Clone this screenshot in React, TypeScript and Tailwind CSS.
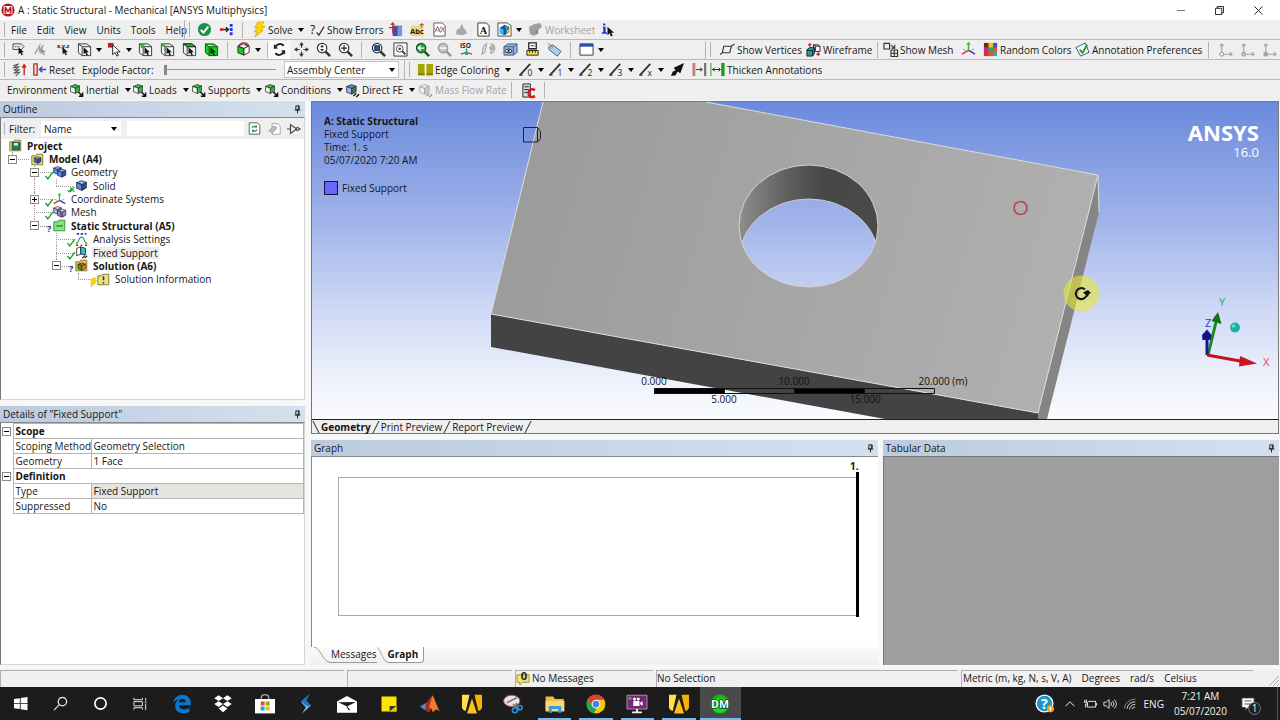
import type { ReactNode } from "react";
import { clsx } from "clsx";

const cube = (top: string, left: string, right: string) => (
  <g stroke="#222" strokeWidth="0.9" strokeLinejoin="round">
    <path d="M2 4.500 8 2l6 2-5.500 3z" fill={top} />
    <path d="M2 4.500 8.500 7v7L2 11.500z" fill={left} />
    <path d="M8.500 7 14 4v7l-5.500 3z" fill={right} />
  </g>
);

const wireBox = (
  <path d="M1.500 2h9l4 3v9.500h-9l-4-3zM1.500 2l4 3h9M5.500 5v9.500" fill="#f6f6f6" stroke="#333" />
);

const pointer = (
  <path d="M7 5.500v7.500l1.800-1.600 1.300 2.800 1.500-.7-1.300-2.700h2.400z" fill="#111" />
);

const magnifier = (fill: string, stroke = "#333") => (
  <g>
    <circle cx="6.500" cy="6.500" r="5" fill={fill} stroke={stroke} strokeWidth="1.300" />
    <path d="m10.200 10.200 4.800 4.800" stroke={stroke} strokeWidth="2.600" />
  </g>
);

const edgeLine = (label: string) => (
  <g>
    <path d="M1 14 12 2" stroke="#333" strokeWidth="2" />
    <path d="M0 14h4" stroke="#333" />
    <text x="9" y="15" fontSize="9" fill="#222">{label}</text>
  </g>
);

const loadCube = (face: string) => (
  <g>
    <g transform="scale(.8)">{cube(face, "#e9f7e9", "#3fae49")}</g>
    <path d="m10 9.500 4 4M14.500 10v4h-4" stroke="#111" strokeWidth="1.600" fill="none" />
  </g>
);

const axes = (
  <g strokeWidth="1.600" fill="none">
    <path d="M8 9V1" stroke="#35c435" />
    <path d="m8 9 7 4" stroke="#2437d6" />
    <path d="m8 9-7 4" stroke="#d33" />
    <path d="m6.500 3 1.500-2 1.500 2" stroke="#35c435" />
    <path d="M2 7.500 5 9M14 7.500 11 9" stroke="#6aa" strokeWidth="1" />
  </g>
);

const triadGray = (dot: string) => (
  <g stroke="#a2a2a2" fill="none" strokeWidth="1.200">
    <path d="M4 12V2M2 4.500 4 2l2 2.500M6 13h9M12.500 11l2.500 2-2.500 2" />
    <circle cx="4" cy="13" r="2" fill={dot} />
  </g>
);

const folder = (fill: string) => (
  <path d="M1 3.500h4.500L7 1.500h7.500v13H1z" fill={fill} stroke="#6b6424" />
);

const ansysMark = (
  <g>
    <path d="M0 .5h6L3 13.500A3.500 3.500 0 0 1 0 11z" fill="#ffe14a" />
    <path d="M10 .5h6V11a3.500 3.500 0 0 1-3 2.500z" fill="#f4b400" />
    <path d="M8 3.500 12 15.500H4z" fill="#ffbf1f" />
  </g>
);

const drawings: Record<string, ReactNode> = {
  mech: (
    <g>
      <circle cx="8" cy="8" r="7.500" fill="#b51a20" />
      <path d="M3 3.500h10v9H3z" fill="#fff" />
      <path d="M4 12V4.500h1.800L8 8l2.200-3.500H12V12h-2V8l-2 3-2-3v4z" fill="#c3151b" />
    </g>
  ),
  ok: (
    <g>
      <circle cx="8" cy="8" r="7" fill="#189146" />
      <path d="m4 8.500 3 2.800L12 5" stroke="#fff" strokeWidth="2.200" fill="none" />
    </g>
  ),
  dots: (
    <g>
      <path d="M3 8h6M7.500 5.500 10 8l-2.500 2.500" stroke="#222" fill="none" strokeWidth="1.500" />
      <path d="M1 6.500h3v3H1z" fill="#d02a2a" />
      <path d="M11.500 2h3v3h-3zM11.500 6.500h3v3h-3zM11.500 11h3v3h-3z" fill="#2438d8" />
    </g>
  ),
  bolt: <path d="M6 0h7L10 4.500h4L9 9h3L3 16l2.500-5.500H2L6 6H3z" fill="#ffd800" stroke="#b99a00" strokeWidth=".6" />,
  question: (
    <g>
      <text x="0" y="13" fontSize="13" fill="#222">?</text>
      <path d="m7 11 2.500 3L15 5" stroke="#333" strokeWidth="1.300" fill="none" />
    </g>
  ),
  chart: (
    <g>
      <path d="M5 4h10v11H5z" fill="#3453a8" />
      <path d="M10 4h5v11h-5z" fill="#7f94cb" />
      <path d="M5 1v11M1 6h10M3 3l2-2 2 2" stroke="#b33" strokeWidth="1.300" fill="none" />
    </g>
  ),
  abc: (
    <g>
      <path d="M1 4h13v11H1z" fill="#e5d77a" />
      <text x="0" y="13" fontSize="8" fontWeight="bold" fill="#222">Abc</text>
      <path d="M10 3h5M12.500 1v5" stroke="#c33" />
    </g>
  ),
  plot: (
    <g>
      <path d="M2 1h9l3 3v11H2z" fill="#fff" stroke="#555" />
      <path d="m3 11 3-6 3 6 4-5" stroke="#c33" fill="none" />
      <path d="m3 7 4 3 3-5 3 6" stroke="#58c" fill="none" />
    </g>
  ),
  ghost: <path d="M8 2c2 1 1 4 4 6l2 4-5 2-7-1 1-5 3-1z" fill="#a9a9a9" />,
  letter: (
    <g>
      <path d="M2 1h9l3 3v11H2z" fill="#fff" stroke="#333" />
      <text x="4" y="12.500" fontSize="11" fontWeight="bold" fontFamily="Liberation Serif" fill="#111">A</text>
    </g>
  ),
  figure: (
    <g>
      <path d="M1 1h10l4 3v11H1z" fill="#fff" stroke="#444" />
      <path d="m3 6 5-3 5 2v6l-5 3-5-2z" fill="#1a49d0" />
      <path d="m3 6 4 2v5.500L3 12z" fill="#20c3e0" />
      <path d="m8 3 5 2-3 4z" fill="#2eb63c" />
      <path d="m10 9 3-2v4l-3 2z" fill="#e3a21a" />
    </g>
  ),
  sheet: (
    <g fill="#9e9e9e">
      <path d="M1 5 7 2l6-1 2 4-5 4-3 6-5-2z" />
      <path d="m8 9 3-1v4l-3 2z" fill="#888" />
    </g>
  ),
  info: (
    <g>
      <path d="M3 5h3v6h1.500v1.500H2V11h1.500V6.500H3zM3.300 1.500h2.400v2.200H3.300z" fill="#1d36d8" />
      <path d="M8 5v9l2.200-2 1.500 3.500 1.800-.8-1.500-3.300H15z" fill="#111" />
    </g>
  ),
  tagPick: (
    <g>
      <path d="M1 2h9l3 3-3 3H1z" fill="#eee" stroke="#444" />
      <path d="M3 5h6" stroke="#444" strokeDasharray="1.500 1" />
      {pointer}
    </g>
  ),
  slashPick: (
    <g opacity=".4">
      <path d="m1 13 5-9v7l4-8" stroke="#333" fill="none" strokeWidth="1.500" />
      {pointer}
    </g>
  ),
  xyzPick: (
    <g>
      <text x="1" y="6" fontSize="6" fontWeight="bold" fill="#222">x,y,z</text>
      {pointer}
    </g>
  ),
  boxPick: <g>{wireBox}{pointer}</g>,
  modePick: (
    <g>
      <path d="M1 1h6v5H1z" fill="#c3202a" />
      <path d="M6 3v10.500l2.600-2.300L10.500 15l1.700-.8-1.900-3.700H14z" fill="#fff" stroke="#222" />
    </g>
  ),
  vertexPick: <g>{wireBox}<path d="M3 2.500h4v4H3z" fill="#19c51e" />{pointer}</g>,
  edgePick: <g>{wireBox}<path d="M1.500 2 5.500 5v4" stroke="#19b51e" strokeWidth="2" fill="none" />{pointer}</g>,
  facePick: <g>{wireBox}<path d="M1.500 2h9l4 3h-9z" fill="#19c51e" stroke="#222" />{pointer}</g>,
  bodyPick: (
    <g>
      <path d="M1.500 2h9l4 3v9.500h-9l-4-3zM1.500 2l4 3h9M5.500 5v9.500" fill="#0ed516" stroke="#124f12" />
      {pointer}
    </g>
  ),
  extend: (
    <g>
      {cube("#f4f4f4", "#1cc91f", "#fafafa")}
      <path d="M3 4c2-4 8-4 10-1l-3 1" stroke="#b23" strokeWidth="1.300" fill="none" />
    </g>
  ),
  rotate: (
    <g stroke="#222" strokeWidth="2" fill="none">
      <path d="M3 7a5.500 5.500 0 0 1 9.500-3M13 9a5.500 5.500 0 0 1-9.500 3" />
      <path d="M2 2.500V7h4.500zM14 13.500V9H9.500z" fill="#222" stroke="none" />
    </g>
  ),
  pan: (
    <g fill="#333">
      <path d="m8 0 2.500 3.500h-5zM8 16l2.500-3.500h-5zM0 8l3.500-2.500v5zM16 8l-3.500-2.500v5z" />
      <path d="M8 3v3M8 10v3M3 8h3M10 8h3" stroke="#333" strokeWidth="1.300" />
    </g>
  ),
  zoomDot: <g>{magnifier("#fff")}<path d="m6.500 2.800 2 2.700h-4zM6.500 10.200l2-2.700h-4z" fill="#222" /></g>,
  zoomPlus: <g>{magnifier("#fff")}<path d="M3.500 6.500h6M6.500 3.500v6" stroke="#222" strokeWidth="1.300" /></g>,
  zoomBox: <g>{magnifier("#fff")}<path d="M4 4h5v5H4z" fill="#2b52b8" stroke="#124" /></g>,
  zoomFit: (
    <g>
      <path d="M1 1h14v14H1z" fill="#fafafa" stroke="#333" />
      <g transform="translate(2.500 2.500) scale(.72)">{magnifier("#fff")}<circle cx="6.500" cy="6.500" r="2" fill="#444" /></g>
    </g>
  ),
  zoomPrev: <g>{magnifier("#27a53a", "#20552a")}<path d="M3 6.500h7M6 4 3.500 6.500 6 9" stroke="#fff" strokeWidth="1.500" fill="none" /></g>,
  zoomNext: <g>{magnifier("#c4c4c4", "#999")}<path d="M3 6.500h7" stroke="#fff" strokeWidth="1.500" /></g>,
  iso: (
    <g>
      <text x="1" y="6" fontSize="7" fontWeight="bold" fill="#222">ISO</text>
      <path d="M8 11V7" stroke="#2a5" strokeWidth="1.500" />
      <path d="m8 11-6 2" stroke="#36d" strokeWidth="1.500" />
      <path d="m8 11 6 2" stroke="#d33" strokeWidth="1.500" />
      <circle cx="8" cy="12" r="2" fill="#1aa" />
    </g>
  ),
  lookAt: (
    <g stroke="#a8a8a8" fill="none" strokeWidth="1.300">
      <path d="m1 13 2-9 3-2-2 9zM10 2c5-1 5 5 4 7l-3 4M9 5l2 4-1 3" />
      <circle cx="12" cy="6" r="2" fill="#bbb" />
    </g>
  ),
  planes: (
    <g>
      <path d="m1 5 4-3h10v9l-4 3H1z" fill="#8fb2df" stroke="#4a5e7c" />
      <path d="M1 5h10v9M11 5l4-3" stroke="#4a5e7c" fill="none" />
      <ellipse cx="6" cy="9.500" rx="3.500" ry="2" fill="#fff" stroke="#123" />
      <circle cx="6" cy="9.500" r="1.200" fill="#123" />
    </g>
  ),
  annot: (
    <g>
      <path d="M4 1h8v6H4zM3 9h10" fill="#fff" stroke="#222" strokeWidth="1.400" />
      <path d="M2 9h12v5H2z" fill="#f3e33a" stroke="#222" />
      <path d="M5 9v2.500M8 9v2.500M11 9v2.500M6 4h4" stroke="#222" />
    </g>
  ),
  tag: (
    <g>
      <path d="m2 5 4-2 9 7-4 5-9-7z" fill="#a9d3f0" stroke="#557" />
      <circle cx="5" cy="5.500" r="1" fill="#fff" stroke="#557" strokeWidth=".6" />
      <path d="M5 5C3 1 1 1 1 3" stroke="#c80" fill="none" />
    </g>
  ),
  window: (
    <g>
      <path d="M1 2h14v12H1z" fill="#fdfdfd" stroke="#333" />
      <path d="M1 2h14v3H1z" fill="#2f4fa6" />
    </g>
  ),
  vertices: (
    <g fill="none" stroke="#333" strokeWidth="1.200">
      <path d="M4 4.500h8l-1.500 7H2.500zM12 4.500 15.500 2M0 13.500l2.500-2" />
    </g>
  ),
  wireframe: (
    <g>
      <path d="M8 3h5l2 1.500V10h-5L8 8zM8 3l2 1.500h5M10 4.500V10" fill="#fff" stroke="#222" />
      <path d="m1 8 3-2h5v6l-2 3H1z" fill="#19a5a5" stroke="#122" />
      <path d="M1 9h6v6M7 9l2-2.500" stroke="#122" fill="none" />
      <path d="M2 3h4M4 1v4M11 13h4M13 11v4" stroke="#c22" strokeWidth="1.300" />
    </g>
  ),
  mesh: (
    <g fill="none" stroke="#333" strokeWidth="1.200">
      <path d="M1 1.500h6v6H1zM8.500 8.500h7v7h-7zM12 8.500v7M8.500 12h7M8.500 3.500 12 6M12.500 3v3.500H9" />
    </g>
  ),
  axes,
  random: (
    <g>
      <path d="M1 1h14v14H1z" fill="#e8552b" />
      <path d="M1 1h5v5H1z" fill="#6b2d14" />
      <path d="M6 1h5v5H6z" fill="#f0c419" />
      <path d="M11 1h4v5h-4z" fill="#2d59c9" />
      <path d="M1 6h5v5H1z" fill="#c5259a" />
      <path d="M6 6h5v5H6z" fill="#26a65b" />
      <path d="M1 11h5v4H1z" fill="#e12d2d" />
      <path d="M11 11h4v4h-4z" fill="#20b2c4" />
    </g>
  ),
  prefs: (
    <g>
      <path d="m1 6 10-5 4 10-9 4z" fill="#f8fbff" stroke="#357" />
      <path d="m5 8 3 3.500L13 3" stroke="#1aa32a" strokeWidth="2" fill="none" />
    </g>
  ),
  triadA: triadGray("#fff"),
  triadB: triadGray("#ccc"),
  triadC: triadGray("#a2a2a2"),
  explode: (
    <g stroke="#555" fill="none">
      <path d="M1 4l6-2-5 4 6-1-6 4 6-1-6 4 6-1-4 4" strokeWidth="1.100" />
      <path d="M13 14V4M11 6l2-3 2 3" stroke="#c22" strokeWidth="1.500" />
    </g>
  ),
  reset: (
    <g fill="none">
      <path d="M2 2h3.500v12H2z" stroke="#b33" strokeWidth="1.500" />
      <path d="M8 8h7M11 5 8 8l3 3" stroke="#2a45c9" strokeWidth="1.600" />
    </g>
  ),
  coloring: (
    <g>
      <path d="M0 2h7v12H0zM9 2h7v12H9z" fill="#a9a300" />
      <path d="M0 12h7v2H0zM9 12h7v2H9z" fill="#858000" />
    </g>
  ),
  edge0: edgeLine("0"),
  edge1: edgeLine("1"),
  edge2: edgeLine("2"),
  edge3: edgeLine("3"),
  edgeX: edgeLine("x"),
  arrow: <path d="m1 15 2-5 3-1-2-3L15 1l-4 11-3-2-2 4z" fill="#111" />,
  gap: (
    <g>
      <path d="M2 1v14" stroke="#c98080" strokeWidth="3" />
      <path d="M14 1v14" stroke="#777" strokeWidth="2.500" />
      <path d="M4 8h7M8.500 6 11 8l-2.500 2" stroke="#333" fill="none" />
    </g>
  ),
  thicken: (
    <g>
      <path d="M1 1v14" stroke="#2a9a2a" />
      <path d="M12 1h3.500v14H12z" fill="#199a1f" />
      <path d="M2 8h9M5 6 3 8l2 2M9 6l2 2-2 2" stroke="#222" fill="none" />
    </g>
  ),
  load: loadCube("#35c23c"),
  direct: (
    <g>
      <g transform="scale(.85)">{cube("#5b86cf", "#9db8e6", "#3d7a58")}</g>
      <path d="m9 14 3-3M12 15l3-3" stroke="#111" strokeWidth="1.500" />
    </g>
  ),
  massFlow: (
    <g opacity=".4">
      <g transform="scale(.85)">{cube("#ddd", "#eee", "#999")}</g>
      <path d="m9 14 3-3M12 15l3-3" stroke="#111" strokeWidth="1.500" />
    </g>
  ),
  report: (
    <g>
      <path d="M2 1h8v14H2z" fill="#ddd" stroke="#222" />
      <path d="M3.500 4h5M3.500 7h5M3.500 10h5" stroke="#222" />
      <path d="M15 7.500c-4-2-7 0-7 3.500s3 5 7 3" stroke="#e2111c" strokeWidth="2.500" fill="none" />
    </g>
  ),
  refresh: (
    <g>
      <path d="M1.500 1h10l3 3v11h-13z" fill="#fff" stroke="#445" />
      <path d="M5 7.500A3 3 0 0 1 10 6M11 9a3 3 0 0 1-5 1.500" stroke="#2a9d35" strokeWidth="1.500" fill="none" />
      <path d="M11 3.500V7H7.500zM5 13V9.500h3.500z" fill="#2a9d35" />
    </g>
  ),
  clear: (
    <g>
      <path d="M5 2h7l3 3v10H5z" fill="#fff" stroke="#999" />
      <path d="m1 11 6-6 4 2-5 6z" fill="#b9bfd4" stroke="#8b90a3" />
    </g>
  ),
  collapse: (
    <g fill="none" stroke="#444" strokeWidth="1.300">
      <path d="M0 8h4M4 3v10l7-5zM13.500 8H16" />
      <circle cx="12" cy="8" r="1.700" />
    </g>
  ),
  project: (
    <g>
      {folder("#e9df63")}
      <path d="M4 4h9v9H4z" fill="#1d7f74" stroke="#0d3f3a" />
      <path d="M6 5h5v3H6z" fill="#d9efe9" />
    </g>
  ),
  model: <g>{folder("#efe06a")}<g transform="translate(2.500 3) scale(.7)">{cube("#7ea6f0", "#3b66cf", "#2c4da6")}</g></g>,
  geometry: (
    <g>
      <g transform="translate(-1 -1) scale(.8)">{cube("#7ea6f0", "#5c88e2", "#2c4da6")}</g>
      <g transform="translate(4 2) scale(.84)">{cube("#7ea6f0", "#5c88e2", "#2c4da6")}</g>
    </g>
  ),
  solid: cube("#8db0f2", "#5c88e2", "#2c4da6"),
  meshTree: (
    <g>
      <g transform="translate(-1 -1) scale(.8)">{cube("#cfd2f2", "#aab0e2", "#8c90cc")}</g>
      <g transform="translate(4 2) scale(.84)">{cube("#cfd2f2", "#aab0e2", "#8c90cc")}</g>
      <path d="m5 8 9 5M7 12l7-6M9 5v9" stroke="#446" strokeWidth=".7" />
    </g>
  ),
  environment: (
    <g>
      <path d="M1 3.500h4.500L7 1.500h7.500v13H1z" fill="#7fe77f" stroke="#2b7a2b" />
      <path d="M4 8.500h8" stroke="#1d5c1d" strokeWidth="1.300" />
    </g>
  ),
  settings: (
    <g fill="none">
      <path d="M2 1h3M7 1h3M12 1h2" stroke="#2438d8" strokeWidth="2" />
      <path d="M1 13C5 13 4 5 8 5s3 8 7 8" stroke="#1c8f3c" strokeWidth="1.300" />
      <path d="M1 15h3M7 15h2M12 15h3" stroke="#c22" strokeWidth="2" />
    </g>
  ),
  support: (
    <g>
      <path d="m2 3 5-2v9l-5 2z" fill="#fff" stroke="#222" />
      <path d="m7 1 6 2v8l-6-1z" fill="#2fc4d4" stroke="#222" />
      <path d="m9 15 3-3M12 15l3-3" stroke="#222" strokeWidth="1.400" />
    </g>
  ),
  solution: (
    <g>
      {folder("#e6cf3b")}
      <g transform="translate(2 3) scale(.78)">{cube("#e0522a", "#2f9d3f", "#d98a1b")}</g>
    </g>
  ),
  solutionInfo: (
    <g>
      {folder("#f2e470")}
      <path d="M8 4v5M8 11v2" stroke="#1d2fc0" strokeWidth="2" />
    </g>
  ),
  check: <path d="m1 9 4 5L14 2" stroke="#17a22b" strokeWidth="2.500" fill="none" />,
  hidden: <path d="m1 11 3 3 4-6M6 6l7 8M13 5 6 14" stroke="#17a22b" strokeWidth="2" fill="none" />,
  help: <text x="3" y="14" fontSize="17" fontWeight="bold" fill="#26329c">?</text>,
  pin: <path d="M5 1.500h6v7H5zM9.500 1.500v7M3 9h10M8 9v6" stroke="#222" strokeWidth="1.700" fill="none" />,
  messages: (
    <g>
      <path d="M1 4h13v8H7l-3 3v-3H1z" fill="#f3e07a" stroke="#a58f2a" />
      <text x="5" y="10" fontSize="12" fontWeight="bold" fill="#222">0</text>
    </g>
  ),
  start: <path d="M1 3.200 7.300 2.300v5.400H1zM8.200 2.200 15.500 1v6.700H8.200zM1 8.500h6.300v5.400L1 13zM8.200 8.500h7.300v6.700L8.200 14z" fill="#fff" />,
  search: <path d="M1 15 6.500 9.500M10 1.500a4.500 4.500 0 1 0 .1 0z" stroke="#eee" strokeWidth="1.200" fill="none" />,
  cortana: <circle cx="8" cy="8" r="6" stroke="#fff" strokeWidth="1.800" fill="none" />,
  taskView: <path d="M1 2v2h9V2M1 6h9v4.500H1zM1 14.500v-2h9v2M13.500 2v3M13.500 8v7M12.500 6.500h2" stroke="#eee" fill="none" />,
  edge: <path d="M1 7C1.500 3 5 .5 8.500.5 12.500.5 15 3.500 15 7v2H5.500c.2 3 4.500 4.500 8.500 2.200v3C9 17 2.500 15 2.500 9.500c0-2.500 1.500-4.500 3.500-5.300C3.500 4.500 2 5.500 1 7zm4.500-.5H11C11 3 6 3 5.500 6.500z" fill="#0b78d0" />,
  dropbox: <path d="m4.500 1 3.500 2.300-3.500 2.300L1 3.300zM11.500 1 15 3.300l-3.500 2.300L8 3.300zM4.500 5.700 8 8l-3.500 2.300L1 8zM11.500 5.700 15 8l-3.500 2.300L8 8zM8 9.200l3.500 2.300L8 14.500l-3.500-3z" fill="#fff" />,
  store: (
    <g>
      <path d="M5 5V3a3 2.500 0 0 1 6 0v2" stroke="#aaa" fill="none" />
      <path d="M0 4h16v11.500H0z" fill="#fff" />
      <path d="M4.500 6h3.200v3.200H4.500z" fill="#e8501f" />
      <path d="M8.500 6h3.200v3.200H8.500z" fill="#7cb512" />
      <path d="M4.500 10h3.200v3.200H4.500z" fill="#1aa3e8" />
      <path d="M8.500 10h3.200v3.200H8.500z" fill="#f5b60f" />
    </g>
  ),
  swift: (
    <g>
      <path d="M11 0 4 6l5 5 1-4-2-2z" fill="#3f86d4" />
      <path d="M4 6.500 12 9l-7.500 7L8 10.500z" fill="#6fd0ef" />
      <path d="M11 0 8 5l4 4-3 1-5-4z" fill="#2c70c0" />
    </g>
  ),
  mail: (
    <g>
      <path d="M0 6 8 1.500 16 6v9H0z" fill="#fff" />
      <path d="m1 6.500 14-.2L8 10z" fill="#1c1c1c" />
      <path d="m8 10 2 3" stroke="#1c1c1c" />
    </g>
  ),
  note: (
    <g>
      <path d="M2 2h12v12H2z" fill="#ffe600" />
      <path d="M8.500 14V9.500H14z" fill="#333" />
      <path d="M8.500 14 14 9.500V14z" fill="#f0c400" />
    </g>
  ),
  matlab: (
    <g>
      <path d="m0 10 5-3 3 2-4 4z" fill="#4a8fc7" />
      <path d="m5 7 5-6 1 9-4 5-3-2z" fill="#a92c16" />
      <path d="M10 1c2 3 3 8 6 13-2-2-4-2-6 1 0-5-3-4-3-4z" fill="#ec7a2d" />
    </g>
  ),
  ansys: ansysMark,
  snip: (
    <g>
      <ellipse cx="7" cy="5.500" rx="6.500" ry="4.500" fill="#e9e3e3" stroke="#a55" strokeWidth=".8" />
      <path d="m3 7 8-4M8 8l5 4M9 12l2-5" stroke="#777" strokeWidth="1.200" />
      <circle cx="9.500" cy="13" r="2" stroke="#2a8ed0" strokeWidth="1.300" fill="none" />
      <circle cx="13.500" cy="11" r="1.800" stroke="#2a8ed0" strokeWidth="1.300" fill="none" />
    </g>
  ),
  explorer: (
    <g>
      <path d="M.500 2h6L8 4h7v9H.5z" fill="#f0bc42" />
      <path d="M.500 5.500h15V14H.5z" fill="#fbd874" />
      <path d="M3 15V9.500h10V15h-2.500v-3h-5v3z" fill="#3b9be0" />
    </g>
  ),
  chrome: (
    <g>
      <circle cx="8" cy="8" r="7.500" fill="#f6c712" />
      <path d="M1.500 4.200A7.500 7.500 0 0 1 14.600 4.500H8L5 9.700z" fill="#df3d2f" />
      <path d="M1.500 4.200 5 10l3.500 1.500-2 3.900A7.500 7.500 0 0 1 1.500 4.200z" fill="#23a356" />
      <circle cx="8" cy="8" r="3.500" fill="#fff" />
      <circle cx="8" cy="8" r="2.700" fill="#3f82ee" />
    </g>
  ),
  recorder: (
    <g>
      <path d="M0 1h16v11H0z" fill="#742a72" stroke="#b59ab5" strokeWidth=".7" />
      <path d="M5 5.500h5v4H5zM10.500 7l2-1.200v3.500l-2-1.200z" fill="#fff" />
      <circle cx="6" cy="4" r="1.200" fill="#fff" />
      <circle cx="9" cy="4" r="1.200" fill="#fff" />
      <path d="m1.500 2 2.500 1.500-2.500 1.500z" fill="#4c4" />
      <path d="M7.200 12h1.600v2H12v1.300H4V14h3.200z" fill="#eee" />
    </g>
  ),
  dm: (
    <g>
      <circle cx="8" cy="8" r="7.600" fill="#17b01c" />
      <circle cx="8" cy="9" r="6" fill="#24d62a" />
      <text x="8" y="11.200" textAnchor="middle" fontSize="8.500" fontWeight="bold" fill="#fff" stroke="#042" strokeWidth="1.200" paintOrder="stroke">DM</text>
    </g>
  ),
  assist: (
    <g>
      <circle cx="8" cy="8" r="7.600" fill="#fff" />
      <circle cx="8" cy="8" r="6.500" fill="#1a97c9" />
      <text x="5" y="12.500" fontSize="12" fontWeight="bold" fill="#fff">?</text>
      <circle cx="13" cy="12.500" r="3" fill="#f2a71b" />
      <path d="M13 11v3" stroke="#fff" strokeWidth="1.200" />
    </g>
  ),
  chevron: <path d="m2 11 6-6 6 6" stroke="#eee" strokeWidth="1.300" fill="none" />,
  battery: <path d="M6 5h8.500v6.500H5V8M15.500 7v2.500M2 3v3M4 3v3M1 6h4v2H3v4" stroke="#eee" strokeWidth="1.100" fill="none" />,
  volume: <path d="M1 6h2.500L7 3v10l-3.500-3H1zM9 6q1.500 2 0 4M11 4.500q3 3.500 0 7M13 3q4.500 5 0 10" stroke="#eee" fill="none" />,
  wifi: (
    <g fill="none" stroke="#eee">
      <path d="M1.500 13A12 12 0 0 1 14 2.500" stroke="#999" />
      <path d="M4.500 13.500A9 9 0 0 1 14 5.500M7.500 14A6 6 0 0 1 14 8.500M10.500 14A3 3 0 0 1 14 11.500" />
    </g>
  ),
  notify: <path d="M1 1h14v11H8l-3 3v-3H1zM4 4.500h8M4 8h8" fill="#fff" stroke="#333" />,
};

function Icon({ name, className = "size-[15px]" }: { name: string; className?: string }) {
  return (
    <svg viewBox="0 0 16 16" className={clsx("shrink-0 overflow-visible", className)} aria-hidden="true">
      {drawings[name]}
    </svg>
  );
}

function Caret() {
  return <span className="block h-0 w-0 shrink-0 border-x-[3px] border-t-4 border-x-transparent border-t-black" />;
}

function Sep() {
  return <span className="mx-[5px] h-4 w-px shrink-0 bg-[#b4b4b4]" />;
}

function Grip() {
  return <span className="ml-1 mr-[3px] h-[15px] w-px shrink-0 bg-[#b0b0b0]" />;
}

type ToolProps = { icon: string; label: string; caret?: boolean; pressed?: boolean };

function Tool({ icon, label, caret, pressed }: ToolProps) {
  return (
    <button
      aria-label={label}
      className={clsx(
        "flex h-[18px] shrink-0 items-center justify-center gap-1",
        caret ? "w-[30px]" : "w-[22px]",
        pressed && "bg-[#fafafa]",
      )}
    >
      <Icon name={icon} />
      {caret && <Caret />}
    </button>
  );
}

type TextToolProps = { icon?: string; label: string; caret?: boolean; disabled?: boolean; className?: string };

function TextTool({ icon, label, caret, disabled, className }: TextToolProps) {
  return (
    <button
      disabled={disabled}
      className={clsx("flex shrink-0 items-center gap-[2px] whitespace-nowrap", disabled && "text-[#a3a3a3]", className)}
    >
      {icon && <Icon name={icon} />}
      <span>{label}</span>
      {caret && <span className="ml-1 flex"><Caret /></span>}
    </button>
  );
}

const rowClass = "flex h-5 items-center overflow-hidden border-b border-[#b9b9b9]";

function TitleBar() {
  return (
    <header className="flex h-5 items-center bg-white pl-[1px]">
      <Icon name="mech" className="size-[14px]" />
      <h1 className="ml-[3px] flex-1">A : Static Structural - Mechanical [ANSYS Multiphysics]</h1>
      <div className="flex pr-[2px]">
        <button aria-label="Minimize" className="flex h-5 w-[39px] items-center justify-center">
          <span className="h-px w-2 bg-[#777]" />
        </button>
        <button aria-label="Restore" className="flex h-5 w-[39px] items-center justify-center">
          <svg viewBox="0 0 10 10" className="size-[9px]" fill="none" stroke="#111">
            <path d="M.5 2.500h7v7h-7zM2.500 2.500v-2h7v7h-2" />
          </svg>
        </button>
        <button aria-label="Close" className="flex h-5 w-[39px] items-center justify-center">
          <svg viewBox="0 0 10 10" className="size-[9px]" fill="none" stroke="#111">
            <path d="m.5.5 9 9M9.500.5l-9 9" />
          </svg>
        </button>
      </div>
    </header>
  );
}

function Toolbars() {
  return (
    <div className="mb-px bg-[#efefef]">
      <div className={rowClass}>
        <Grip />
        <nav className="flex w-[176px] gap-[10px] pl-[3px]">
          {["File", "Edit", "View", "Units", "Tools", "Help"].map((m) => (
            <button key={m}>{m}</button>
          ))}
        </nav>
        <span className="h-5 w-px bg-[#b4b4b4]" />
        <Grip />
        <Tool icon="ok" label="Up to date" />
        <Tool icon="dots" label="Connect" />
        <Sep />
        <TextTool icon="bolt" label="Solve" caret className="w-[62px] gap-px pl-1" />
        <TextTool icon="question" label="Show Errors" className="w-[74px]" />
        <Tool icon="chart" label="New Chart" />
        <Tool icon="abc" label="New Comment" />
        <Tool icon="plot" label="New Plot" />
        <Tool icon="ghost" label="Section Plane" />
        <Tool icon="letter" label="Annotation" />
        <Tool icon="figure" label="Image" caret />
        <TextTool icon="sheet" label="Worksheet" disabled className="w-[72px] pl-1" />
        <Tool icon="info" label="Selection Information" />
      </div>

      <div className={rowClass}>
        <Grip />
        <Tool icon="tagPick" label="Tag Select" />
        <Tool icon="slashPick" label="Mesh Select" />
        <Tool icon="xyzPick" label="Coordinates" />
        <Tool icon="boxPick" label="Box Select" caret />
        <Tool icon="modePick" label="Select Mode" caret />
        <Tool icon="vertexPick" label="Vertex" />
        <Tool icon="edgePick" label="Edge" />
        <Tool icon="facePick" label="Face" />
        <Tool icon="bodyPick" label="Body" />
        <Sep />
        <Tool icon="extend" label="Extend" caret />
        <span className="ml-1 h-4 w-px bg-[#b4b4b4]" />
        <Tool icon="rotate" label="Rotate" pressed />
        <Tool icon="pan" label="Pan" />
        <Tool icon="zoomDot" label="Zoom" />
        <Tool icon="zoomPlus" label="Box Zoom" />
        <Sep />
        <Tool icon="zoomBox" label="Zoom to Fit" />
        <Tool icon="zoomFit" label="Magnifier" />
        <Tool icon="zoomPrev" label="Previous View" />
        <Tool icon="zoomNext" label="Next View" />
        <Tool icon="iso" label="Isometric" />
        <Tool icon="lookAt" label="Look At" />
        <Tool icon="planes" label="Manage Views" />
        <Tool icon="annot" label="Rescale" />
        <Tool icon="tag" label="Tags" />
        <Sep />
        <Tool icon="window" label="Viewports" caret />
        <div className="ml-auto flex items-center border-l border-[#b4b4b4]">
          <Grip />
          <TextTool icon="vertices" label="Show Vertices" className="w-[92px] pl-[6px]" />
          <TextTool icon="wireframe" label="Wireframe" className="w-[66px]" />
          <Sep />
          <TextTool icon="mesh" label="Show Mesh" className="w-[74px]" />
          <Tool icon="axes" label="Show Axes" />
          <TextTool icon="random" label="Random Colors" className="w-[96px] pl-1" />
          <TextTool icon="prefs" label="Annotation Preferences" className="w-[128px]" />
          <Sep />
          <Tool icon="triadA" label="Triad X" />
          <Tool icon="triadB" label="Triad Y" />
          <Tool icon="triadC" label="Triad Z" />
        </div>
      </div>

      <div className={rowClass}>
        <Grip />
        <Tool icon="explode" label="Explode" />
        <TextTool icon="reset" label="Reset" className="w-[52px] pl-[2px]" />
        <label htmlFor="explode" className="w-[82px]">Explode Factor:</label>
        <input
          id="explode"
          type="range"
          defaultValue={0}
          className="h-3 w-[112px] appearance-none bg-[linear-gradient(#999,#999)] bg-[length:100%_1px] bg-center bg-no-repeat [&::-webkit-slider-thumb]:h-[10px] [&::-webkit-slider-thumb]:w-[3px] [&::-webkit-slider-thumb]:appearance-none [&::-webkit-slider-thumb]:bg-[#888]"
        />
        <div className="relative ml-2 mr-[5px] w-[115px] bg-white">
          <select aria-label="Explode origin" className="block h-[17px] w-full appearance-none border border-[#c4c4c4] pl-[2px]">
            <option>Assembly Center</option>
          </select>
          <span className="pointer-events-none absolute right-1 top-[7px]"><Caret /></span>
        </div>
        <span className="h-5 w-px bg-[#b4b4b4]" />
        <Grip />
        <TextTool icon="coloring" label="Edge Coloring" caret className="w-[103px] pl-[5px]" />
        {["edge0", "edge1", "edge2", "edge3", "edgeX"].map((e) => (
          <Tool key={e} icon={e} label={e} caret />
        ))}
        <Tool icon="arrow" label="Direction" />
        <Tool icon="gap" label="Gap" />
        <TextTool icon="thicken" label="Thicken Annotations" />
      </div>

      <div className="flex h-5 items-center overflow-hidden">
        <span className="w-[69px] pl-[7px]">Environment</span>
        <TextTool icon="load" label="Inertial" caret className="w-[63px]" />
        <TextTool icon="load" label="Loads" caret className="w-[59px]" />
        <TextTool icon="load" label="Supports" caret className="w-[73px]" />
        <TextTool icon="load" label="Conditions" caret className="w-[81px]" />
        <TextTool icon="direct" label="Direct FE" caret className="w-[73px]" />
        <TextTool icon="massFlow" label="Mass Flow Rate" disabled className="w-[88px]" />
        <Sep />
        <Tool icon="report" label="Commands" />
        <Sep />
      </div>
    </div>
  );
}

function PanelHeader({ title }: { title: string }) {
  return (
    <div className="flex h-4 shrink-0 items-center justify-between bg-linear-to-r from-[#bccbdd] to-[#d3e1ef] px-[3px]">
      <h2>{title}</h2>
      <button aria-label={`Pin ${title}`}>
        <Icon name="pin" className="size-[9px]" />
      </button>
    </div>
  );
}

type Guide = "line" | "last" | "none";
type Node = {
  label: string;
  icon: string;
  guides: Guide[];
  toggle?: "+" | "−";
  status?: string;
  bold?: boolean;
  selected?: boolean;
};

const tree: Node[] = [
  { label: "Project", icon: "project", guides: [], bold: true },
  { label: "Model (A4)", icon: "model", guides: ["last"], toggle: "−", bold: true },
  { label: "Geometry", icon: "geometry", guides: ["none", "line"], toggle: "−", status: "check" },
  { label: "Solid", icon: "solid", guides: ["none", "line", "last"], status: "hidden" },
  { label: "Coordinate Systems", icon: "axes", guides: ["none", "line"], toggle: "+", status: "check" },
  { label: "Mesh", icon: "meshTree", guides: ["none", "line"], status: "check" },
  { label: "Static Structural (A5)", icon: "environment", guides: ["none", "last"], toggle: "−", status: "help", bold: true },
  { label: "Analysis Settings", icon: "settings", guides: ["none", "none", "line"], status: "check" },
  { label: "Fixed Support", icon: "support", guides: ["none", "none", "line"], status: "check", selected: true },
  { label: "Solution (A6)", icon: "solution", guides: ["none", "none", "last"], toggle: "−", status: "help", bold: true },
  { label: "Solution Information", icon: "solutionInfo", guides: ["none", "none", "none", "last"], status: "bolt" },
];

function ToggleBox({ sign }: { sign: string }) {
  return (
    <span className="flex size-[9px] items-center justify-center border border-[#8a8a8a] bg-white">
      <svg viewBox="0 0 5 5" className="size-[5px]" stroke="#000" fill="none">
        <path d={sign === "+" ? "M0 2.500h5M2.500 0v5" : "M0 2.500h5"} />
      </svg>
    </span>
  );
}

function TreeRow({ node }: { node: Node }) {
  return (
    <li className="flex items-center pl-[6px]">
      {node.guides.map((g, i) => {
        const own = i === node.guides.length - 1;
        return (
          <span key={i} className="relative flex w-[22px] items-center self-stretch">
            {g !== "none" && (
              <span className={clsx("absolute left-[5px] top-0 border-l border-dotted border-[#999]", g === "last" ? "h-1/2" : "h-full")} />
            )}
            {own && <span className="absolute left-[5px] right-0 top-1/2 border-t border-dotted border-[#999]" />}
            {own && node.toggle && (
              <button aria-label={`Toggle ${node.label}`} className="relative ml-[1px]">
                <ToggleBox sign={node.toggle} />
              </button>
            )}
          </span>
        );
      })}
      <span className="relative ml-[2px] flex">
        <Icon name={node.icon} className="size-[13px]" />
        {node.status && (
          <span className="absolute -left-2 top-[5px]">
            <Icon name={node.status} className="size-[9px]" />
          </span>
        )}
      </span>
      <span className={clsx("ml-[4px] whitespace-nowrap px-px", node.bold && "font-bold", node.selected && "bg-[#ededed]")}>
        {node.label}
      </span>
    </li>
  );
}

function Outline() {
  return (
    <section className="flex min-h-0 flex-1 flex-col">
      <PanelHeader title="Outline" />
      <div className="flex min-h-0 flex-1 flex-col border border-[#d5d5d5] border-l-[#777] border-t-[#888] bg-white">
        <div className="flex h-[21px] items-center bg-[#efefef] px-[3px]">
          <span className="mr-1 h-[13px] w-px bg-[#b0b0b0]" />
          <label htmlFor="filter" className="w-[32px]">Filter:</label>
          <div className="relative w-[80px]">
            <select id="filter" className="block h-[15px] w-full appearance-none bg-white pl-[3px]">
              <option>Name</option>
            </select>
            <span className="pointer-events-none absolute right-1 top-[6px]"><Caret /></span>
          </div>
          <input aria-label="Filter text" className="ml-[6px] h-[15px] min-w-0 flex-1 bg-white" />
          <button aria-label="Refresh" className="ml-1"><Icon name="refresh" className="size-[13px]" /></button>
          <button aria-label="Clear" className="ml-[7px]"><Icon name="clear" className="size-[13px]" /></button>
          <button aria-label="Collapse" className="ml-[6px]"><Icon name="collapse" className="size-[14px]" /></button>
        </div>
        <ul className="grid h-[147px] auto-rows-fr leading-[12px]">
          {tree.map((n) => (
            <TreeRow key={n.label} node={n} />
          ))}
        </ul>
      </div>
    </section>
  );
}

const details = [
  { group: "Scope", rows: [["Scoping Method", "Geometry Selection"], ["Geometry", "1 Face"]] },
  { group: "Definition", rows: [["Type", "Fixed Support"], ["Suppressed", "No"]] },
];

function Details() {
  return (
    <section className="flex h-[259px] shrink-0 flex-col">
      <PanelHeader title={'Details of "Fixed Support"'} />
      <div className="flex-1 border border-[#d5d5d5] border-l-[#777] border-t-[#888] bg-white">
        <table className="w-full table-fixed border-collapse leading-[14px]">
          <colgroup>
            <col className="w-[12px]" />
            <col className="w-[78px]" />
            <col />
          </colgroup>
          {details.map((d) => (
            <tbody key={d.group}>
              <tr className="h-[15px]">
                <td className="p-0">
                  <button aria-label={`Toggle ${d.group}`} className="flex pl-[1px]"><ToggleBox sign="−" /></button>
                </td>
                <th colSpan={2} className="border border-[#b5b5b5] p-0 pl-[2px] text-left font-bold">{d.group}</th>
              </tr>
              {d.rows.map(([k, v]) => (
                <tr key={k} className="h-[15px]">
                  <td className="p-0" />
                  <td className="whitespace-nowrap border border-[#b5b5b5] p-0 pl-[2px]">{k}</td>
                  <td className={clsx("border border-[#b5b5b5] p-0 pl-[2px]", k === "Type" && "bg-[#e6e4e1]")}>{v}</td>
                </tr>
              ))}
            </tbody>
          ))}
        </table>
      </div>
    </section>
  );
}

function Viewport() {
  return (
    <div className="relative min-h-0 flex-1 overflow-hidden border border-[#777] border-b-[#222]">
      <svg viewBox="312 102 966 317" preserveAspectRatio="xMidYMid slice" className="absolute inset-0 h-full w-full">
        <defs>
          <linearGradient id="sky" gradientUnits="userSpaceOnUse" x1="0" y1="102" x2="0" y2="419">
            <stop offset="0" stopColor="#6a8add" />
            <stop offset=".37" stopColor="#a0b3ea" />
            <stop offset=".65" stopColor="#ced8f5" />
            <stop offset=".88" stopColor="#eff2fc" />
            <stop offset="1" stopColor="#fafbff" />
          </linearGradient>
          <linearGradient id="plate" gradientUnits="userSpaceOnUse" x1="510" y1="160" x2="1090" y2="330">
            <stop offset="0" stopColor="#9b9b9b" />
            <stop offset="1" stopColor="#b1b1b1" />
          </linearGradient>
          <linearGradient id="bore" x1="0" x2="1" y1="0" y2="0">
            <stop offset="0" stopColor="#8e8e8e" />
            <stop offset=".35" stopColor="#5f5f5f" />
            <stop offset=".6" stopColor="#474747" />
            <stop offset="1" stopColor="#4a4a4a" />
          </linearGradient>
          <clipPath id="mouth">
            <ellipse cx="808.500" cy="226" rx="69.500" ry="61" />
          </clipPath>
        </defs>
        <path d="M312 102h966v317H312z" fill="url(#sky)" />
        <path d="M1098 175 1099 212 1047 419h-9v-6z" fill="#858585" />
        <path d="M491 314 1038 413v6H885L491 347z" fill="#434343" />
        <path d="M543 102h163l392 73-60 238L491 314z" fill="url(#plate)" />
        <path d="m543 102-52 212 547 99 60-238-392-73" fill="none" stroke="#dcdcdc" />
        <path d="M1098 175 1099 212" stroke="#ddd" />
        <ellipse cx="808.500" cy="226" rx="69.500" ry="61" fill="url(#bore)" />
        <g clipPath="url(#mouth)">
          <ellipse cx="809" cy="260" rx="70" ry="61" fill="url(#sky)" stroke="#ccc" />
        </g>
        <ellipse cx="808.500" cy="226" rx="69.500" ry="61" fill="none" stroke="#d5d5d5" />

        <path d="M523.500 127.500h14l3 4v7l-3 3.500h-14zM537.500 127.500v14.500" fill="none" stroke="#1d2533" />
        <circle cx="1020.500" cy="208" r="6.500" fill="none" stroke="#b8474a" strokeWidth="1.700" />

        <g stroke="#111">
          <path d="M654.500 388.500h280v5h-280z" fill="none" />
          <path d="M654.500 388.500h70v5h-70zM794.500 388.500h70v5h-70z" fill="#000" />
        </g>
        <g fontSize="10" fill="#111" textAnchor="middle">
          <text x="654" y="385">0.000</text>
          <text x="794" y="385">10.000</text>
          <text x="943" y="385">20.000 (m)</text>
          <text x="724" y="403">5.000</text>
          <text x="865" y="403">15.000</text>
        </g>

        <circle cx="1081.500" cy="293.500" r="18" fill="#e6e63c" fillOpacity=".6" />
        <path d="M1085 289.500a5.500 5.500 0 1 0 1.500 6" fill="none" stroke="#111" strokeWidth="2" />
        <path d="m1083 292.500 5-2.500 3 3-2 1-1 3z" fill="#111" />

        <g strokeWidth="3">
          <path d="m1208 355 8-33" stroke="#1b8a22" />
          <path d="m1218 312 3.500 12-10-3z" fill="#14711b" />
          <path d="M1207 355v-16" stroke="#141a8c" />
          <path d="M1207 329.500 1211.500 335l-1 5h-8l-.5-5z" fill="#10168a" />
          <path d="m1207 355 33 6" stroke="#c31218" />
          <path d="m1240 356 17 7.500-18 3z" fill="#c8141a" />
        </g>
        <circle cx="1235" cy="327.500" r="5" fill="#14b3a5" />
        <circle cx="1233.500" cy="326" r="1.800" fill="#5fe0d3" />
        <g fontSize="11">
          <text x="1219" y="306" fill="#3aa35c">Y</text>
          <text x="1205" y="327" fill="#2a3bb5">Z</text>
          <text x="1263" y="366" fill="#e0495c">X</text>
        </g>
      </svg>

      <div className="absolute left-3 top-[13px] leading-[13px]">
        <p className="font-bold">A: Static Structural</p>
        <p>Fixed Support</p>
        <p>Time: 1. s</p>
        <p>05/07/2020 7:20 AM</p>
        <p className="mt-[14px] flex items-center gap-1">
          <span className="size-[14px] border border-[#15153a] bg-[#6a66fb]" />
          Fixed Support
        </p>
      </div>

      <div className="absolute right-[19px] top-[18px] text-right text-white">
        <p className="font-['Noto_Sans',sans-serif] text-[22px] font-bold leading-[25px]">ANSYS</p>
        <p className="text-[13px] leading-[14px]">16.0</p>
      </div>
    </div>
  );
}

function Slash({ flip }: { flip?: boolean }) {
  return (
    <svg viewBox="0 0 8 12" className="h-3 w-2 shrink-0" stroke="#222" fill="none">
      <path d={flip ? "m1 0 6 12" : "M7 0 1 12"} />
    </svg>
  );
}

function ViewTabs() {
  return (
    <div className="flex h-[14px] shrink-0 items-center gap-px border border-t-0 border-[#777] bg-[#efefef] leading-[12px]">
      <Slash flip />
      <button className="font-bold">Geometry</button>
      <Slash />
      <button>Print Preview</button>
      <Slash />
      <button>Report Preview</button>
      <Slash />
    </div>
  );
}

function GraphPanel() {
  return (
    <section className="flex min-w-0 flex-[566] flex-col">
      <PanelHeader title="Graph" />
      <div className="flex min-h-0 flex-1 flex-col border-l border-t border-[#888] bg-white pl-[26px] pr-[19px] pt-[3px]">
        <p className="text-right font-bold leading-[12px]">1.</p>
        <div className="flex h-[145px] flex-col border-r-[3px] border-black pb-px pt-[5px]">
          <div className="flex-1 border border-r-0 border-[#a8a8a8]" />
        </div>
      </div>
      <div className="flex h-[18px] shrink-0 items-start bg-linear-to-b from-[#fbfbfb] to-[#efefef] pl-[2px]">
        <svg viewBox="0 0 18 16" className="h-4 w-[18px]" fill="none" stroke="#999">
          <path d="M1 0c8 2 8 15 17 15.500" />
        </svg>
        <button className="h-4 border-b border-[#999] leading-[15px]">Messages</button>
        <svg viewBox="0 0 12 16" className="h-4 w-[11px]" fill="none" stroke="#999">
          <path d="M0 0c5 2 5 15 12 15.500" />
        </svg>
        <button className="h-4 rounded-br border-b border-r border-[#999] bg-white pr-[5px] font-bold leading-[15px]">Graph</button>
      </div>
    </section>
  );
}

function StatusBar() {
  const cell = "flex h-[17px] items-start border-l border-t border-[#b0b0b0] whitespace-nowrap leading-[15px]";
  return (
    <footer className="flex h-[18px] shrink-0 items-end gap-[3px] bg-[#f0f0f0]">
      <div className={clsx(cell, "w-[344px]")} />
      <div className={clsx(cell, "w-[165px]")} />
      <div className={clsx(cell, "w-[138px] gap-px")}>
        <Icon name="messages" />
        No Messages
      </div>
      <div className={clsx(cell, "min-w-0 flex-1")}>No Selection</div>
      <div className={clsx(cell, "w-[292px] gap-[10px] pl-px")}>
        <span>Metric (m, kg, N, s, V, A)</span>
        <span>Degrees</span>
        <span>rad/s</span>
        <span>Celsius</span>
      </div>
      <svg viewBox="0 0 24 16" className="h-4 w-6" stroke="#aaa">
        <path d="M13 15 23 5M17 15l6-6M21 15l2-2" />
      </svg>
    </footer>
  );
}

const pinned = ["start", "search", "cortana", "taskView"];
const apps = [
  { icon: "edge" },
  { icon: "dropbox" },
  { icon: "store" },
  { icon: "swift" },
  { icon: "mail" },
  { icon: "note" },
  { icon: "matlab" },
  { icon: "ansys" },
  { icon: "snip" },
  { icon: "explorer", running: true },
  { icon: "chrome", running: true },
  { icon: "recorder", running: true },
  { icon: "ansys", running: true },
  { icon: "dm", running: true, active: true },
];

function Taskbar() {
  return (
    <footer className="flex h-[33px] shrink-0 items-stretch bg-[#1c1c1c] text-[#f2f2f2]">
      {pinned.map((p) => (
        <button key={p} aria-label={p} className="flex w-10 items-center justify-center">
          <Icon name={p} />
        </button>
      ))}
      <div className="ml-px grid w-[580px] grid-cols-14">
        {apps.map((a, i) => (
          <button
            key={i}
            aria-label={a.icon}
            className={clsx("relative flex items-center justify-center", a.active && "bg-[#4a4a4a]")}
          >
            <Icon name={a.icon} className="size-5" />
            {a.running && (
              <span className={clsx("absolute bottom-0 h-[2px] bg-[#76b9ed]", a.active ? "inset-x-0" : "inset-x-1")} />
            )}
          </button>
        ))}
      </div>
      <div className="ml-auto flex items-center">
        <button aria-label="Support" className="mr-[6px]"><Icon name="assist" className="size-[19px]" /></button>
        <button aria-label="Show hidden icons" className="mx-1"><Icon name="chevron" className="size-3" /></button>
        <button aria-label="Battery" className="mx-[3px]"><Icon name="battery" className="size-[14px]" /></button>
        <button aria-label="Volume" className="mx-[3px]"><Icon name="volume" className="size-[14px]" /></button>
        <button aria-label="Network" className="mx-[3px]"><Icon name="wifi" className="size-[14px]" /></button>
        <button className="ml-1">ENG</button>
        <div className="mx-[10px] text-center leading-[15px]">
          <p>7:21 AM</p>
          <p>05/07/2020</p>
        </div>
        <button aria-label="Notifications" className="relative ml-1 mr-[22px]">
          <Icon name="notify" className="size-[14px]" />
          <span className="absolute left-[7px] top-[5px] flex size-[13px] items-center justify-center rounded-full border border-[#777] bg-[#222]">1</span>
        </button>
        <span className="mr-[2px] h-full w-px bg-[#555]" />
      </div>
    </footer>
  );
}

export default function App() {
  return (
    <div className="flex h-screen min-h-[600px] flex-col overflow-hidden bg-[#f7f7f7] font-['Open_Sans','Noto_Sans',sans-serif] text-[10px] leading-4 text-[#161616]">
      <TitleBar />
      <Toolbars />
      <main className="flex min-h-0 flex-1 gap-[6px] pb-1 pr-[1px]">
        <div className="flex w-[305px] shrink-0 flex-col gap-[6px]">
          <Outline />
          <Details />
        </div>
        <div className="flex min-w-0 flex-1 flex-col">
          <Viewport />
          <ViewTabs />
          <div className="mt-[6px] flex h-[225px] shrink-0 gap-[5px]">
            <GraphPanel />
            <section className="flex min-w-0 flex-[396] flex-col">
              <PanelHeader title="Tabular Data" />
              <div className="flex-1 border-l border-t border-[#777] bg-[#9e9e9e]" />
            </section>
          </div>
        </div>
      </main>
      <StatusBar />
      <Taskbar />
    </div>
  );
}
